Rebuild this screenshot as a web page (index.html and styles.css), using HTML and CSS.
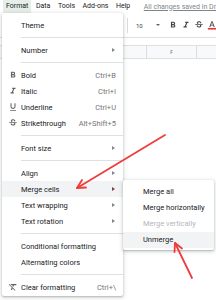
FILE: index.html
```html
<!DOCTYPE html>
<html>
<head>
<meta charset="utf-8">
<link rel="stylesheet" href="styles.css">
</head>
<body>
<div class="app">
  <div class="menubar">
    <span class="mb-item active">Format</span>
    <span class="mb-item">Data</span>
    <span class="mb-item">Tools</span>
    <span class="mb-item">Add-ons</span>
    <span class="mb-item">Help</span>
    <span class="saved">All changes saved in Drive</span>
  </div>
  <div class="toolbar">
    <span class="tb-sep"></span>
    <span class="tb-size"><span>10</span><span class="caret"></span></span>
    <span class="tb-btn"><svg viewBox="0 0 24 24"><path d="M15.6 10.79c.97-.67 1.65-1.77 1.65-2.79 0-2.26-1.75-4-4-4H7v14h7.04c2.09 0 3.71-1.7 3.71-3.79 0-1.52-.86-2.82-2.15-3.42zM10 6.5h3c.83 0 1.5.67 1.5 1.5s-.67 1.5-1.5 1.5h-3v-3zm3.5 9H10v-3h3.5c.83 0 1.5.67 1.5 1.5s-.67 1.5-1.5 1.5z"/></svg></span>
    <span class="tb-btn"><svg viewBox="0 0 24 24"><path d="M10 4v3h2.21l-3.42 8H6v3h8v-3h-2.21l3.42-8H18V4z"/></svg></span>
    <span class="tb-btn"><svg viewBox="0 0 24 24"><path d="M7.24 8.75c-.26-.48-.39-1.03-.39-1.67 0-.61.13-1.16.4-1.670.26-.5.63-.93 1.11-1.29.48-.35 1.05-.63 1.7-.83.66-.19 1.39-.29 2.18-.29.81 0 1.54.11 2.21.34.66.22 1.23.54 1.69.94.47.4.83.88 1.08 1.43.25.55.38 1.15.38 1.81h-3.01c0-.31-.05-.59-.15-.85-.09-.27-.24-.49-.44-.68-.2-.19-.45-.33-.75-.44-.3-.1-.66-.16-1.06-.16-.39 0-.74.04-1.03.13-.29.09-.53.21-.72.36-.19.16-.34.34-.44.55-.1.21-.15.43-.15.66 0 .48.25.88.74 1.21.38.25.77.48 1.41.7H7.39c-.05-.08-.11-.17-.15-.25zM21 12v-2H3v2h9.62c.18.07.4.14.55.2.37.17.66.34.87.51.21.17.35.36.43.57.07.2.11.43.11.69 0 .23-.05.45-.14.66-.09.2-.23.38-.42.53-.19.15-.42.26-.71.35-.29.08-.63.13-1.01.13-.43 0-.83-.04-1.18-.13s-.66-.23-.91-.42c-.25-.19-.45-.44-.59-.75-.14-.31-.25-.76-.25-1.21H6.4c0 .55.08 1.13.24 1.58.16.45.37.85.65 1.21.28.35.6.66.98.92.37.26.78.48 1.22.65.44.17.9.3 1.38.39.48.08.96.13 1.44.13.8 0 1.53-.09 2.18-.28s1.21-.45 1.67-.79c.46-.34.82-.77 1.07-1.27s.38-1.07.38-1.71c0-.6-.1-1.14-.31-1.61-.05-.11-.11-.23-.17-.33H21z"/></svg></span>
    <span class="tb-btn"><svg viewBox="0 0 24 24"><path d="M5.49 17h2.42l1.27-3.58h5.65L16.09 17h2.42L13.25 3h-2.5L5.49 17zm4.42-5.61l2.03-5.79h.12l2.03 5.79H9.91z"/><rect class="red" x="2" y="19" width="20" height="4"/></svg></span>
  </div>
  <div class="formula"></div>
  <div class="colheads">
    <span class="rowhead"></span>
    <span class="col">D</span>
    <span class="col">E</span>
    <span class="col">F</span>
    <span class="col"></span>
  </div>
  <div class="grid"></div>
</div>

<div class="menu main">
  <div class="item"><span class="ic"></span><span class="lbl">Theme</span></div>
  <div class="sep"></div>
  <div class="item"><span class="ic"></span><span class="lbl">Number</span><span class="arr"></span></div>
  <div class="sep"></div>
  <div class="item"><span class="ic"><svg viewBox="0 0 24 24"><path d="M15.6 10.79c.97-.67 1.65-1.77 1.65-2.79 0-2.26-1.75-4-4-4H7v14h7.04c2.09 0 3.71-1.7 3.71-3.79 0-1.52-.86-2.82-2.15-3.42zM10 6.5h3c.83 0 1.5.67 1.5 1.5s-.67 1.5-1.5 1.5h-3v-3zm3.5 9H10v-3h3.5c.83 0 1.5.67 1.5 1.5s-.67 1.5-1.5 1.5z"/></svg></span><span class="lbl">Bold</span><span class="sc">Ctrl+B</span></div>
  <div class="item"><span class="ic"><svg viewBox="0 0 24 24"><path d="M10 4v3h2.21l-3.42 8H6v3h8v-3h-2.21l3.42-8H18V4z"/></svg></span><span class="lbl">Italic</span><span class="sc">Ctrl+I</span></div>
  <div class="item"><span class="ic"><svg viewBox="0 0 24 24"><path d="M12 17c3.31 0 6-2.69 6-6V3h-2.5v8c0 1.93-1.57 3.5-3.5 3.5S8.5 12.93 8.5 11V3H6v8c0 3.31 2.69 6 6 6zm-7 2v2h14v-2H5z"/></svg></span><span class="lbl">Underline</span><span class="sc">Ctrl+U</span></div>
  <div class="item"><span class="ic"><svg viewBox="0 0 24 24"><path d="M7.24 8.75c-.26-.48-.39-1.03-.39-1.67 0-.61.13-1.16.4-1.67.26-.5.63-.93 1.11-1.29.48-.35 1.05-.63 1.7-.83.66-.19 1.39-.29 2.18-.29.81 0 1.54.11 2.21.34.66.22 1.23.54 1.69.94.47.4.83.88 1.08 1.43.25.55.38 1.15.38 1.81h-3.01c0-.31-.05-.59-.15-.85-.09-.27-.24-.49-.44-.68-.2-.19-.45-.33-.75-.44-.3-.1-.66-.16-1.06-.16-.39 0-.74.04-1.03.13-.29.09-.53.21-.72.36-.19.16-.34.34-.44.55-.1.21-.15.43-.15.66 0 .48.25.88.74 1.21.38.25.77.48 1.41.7H7.39c-.05-.08-.11-.17-.15-.25zM21 12v-2H3v2h9.62c.18.07.4.14.55.2.37.17.66.34.87.51.21.17.35.36.43.57.07.2.11.43.11.69 0 .23-.05.45-.14.66-.09.2-.23.38-.42.53-.19.15-.42.26-.71.35-.29.08-.63.13-1.01.13-.43 0-.83-.04-1.18-.13s-.66-.23-.91-.42c-.25-.19-.45-.44-.59-.75-.14-.31-.25-.76-.25-1.21H6.4c0 .55.08 1.13.24 1.58.16.45.37.85.65 1.21.28.35.6.66.98.92.37.26.78.48 1.22.65.44.17.9.3 1.38.39.48.08.96.13 1.44.13.8 0 1.53-.09 2.18-.28s1.21-.45 1.67-.79c.46-.34.82-.77 1.07-1.27s.38-1.07.38-1.71c0-.6-.1-1.14-.31-1.61-.05-.11-.11-.23-.17-.33H21z"/></svg></span><span class="lbl">Strikethrough</span><span class="sc">Alt+Shift+5</span></div>
  <div class="sep"></div>
  <div class="item"><span class="ic"></span><span class="lbl">Font size</span><span class="arr"></span></div>
  <div class="sep"></div>
  <div class="item"><span class="ic"></span><span class="lbl">Align</span><span class="arr"></span></div>
  <div class="item hover"><span class="ic"></span><span class="lbl">Merge cells</span><span class="arr dark"></span></div>
  <div class="item"><span class="ic"></span><span class="lbl">Text wrapping</span><span class="arr"></span></div>
  <div class="item"><span class="ic"></span><span class="lbl">Text rotation</span><span class="arr"></span></div>
  <div class="sep"></div>
  <div class="item"><span class="ic"></span><span class="lbl">Conditional formatting</span></div>
  <div class="item"><span class="ic"></span><span class="lbl">Alternating colors</span></div>
  <div class="sep"></div>
  <div class="item"><span class="ic"><svg viewBox="0 0 24 24"><path d="M3.27 5L2 6.27l6.97 6.97L6.5 19h3l1.57-3.66L16.73 21 18 19.73 3.55 5.27 3.27 5zM6 5v.18L8.82 8h2.4l-.72 1.68 2.1 2.1L14.21 8H20V5H6z"/></svg></span><span class="lbl">Clear formatting</span><span class="sc">Ctrl+\</span></div>
</div>

<div class="menu sub">
  <div class="sitem">Merge all</div>
  <div class="sitem">Merge horizontally</div>
  <div class="sitem disabled">Merge vertically</div>
  <div class="sitem hover">Unmerge</div>
</div>

<svg class="arrows" viewBox="0 0 216 300" width="216" height="300">
  <g fill="none" stroke="#f03c3c" stroke-width="1.8" stroke-linecap="round" stroke-linejoin="round">
    <line x1="165" y1="135" x2="77" y2="188"/>
    <polyline points="82,180 77,188 86,187.5"/>
    <line x1="192" y1="278" x2="175" y2="243"/>
    <polyline points="174.5,252 175,243 182,248.5"/>
  </g>
</svg>
</body>
</html>
```

FILE: styles.css
```css
* { box-sizing: border-box; }
html, body { margin: 0; padding: 0; }
body {
  width: 216px;
  height: 300px;
  overflow: hidden;
  position: relative;
  background: #fff;
  font-family: Roboto, "Liberation Sans", sans-serif;
  color: #202124;
}
.app { width: 216px; height: 300px; overflow: hidden; }

.menubar {
  height: 13px;
  display: flex;
  align-items: center;
  gap: 1.5px;
  padding-left: 3px;
  font-size: 7px;
  white-space: nowrap;
  overflow: hidden;
}
.mb-item { padding: 0 3px; height: 13px; line-height: 13px; }
.mb-item.active { background: #e6efe7; }
.saved {
  margin-left: 9px;
  color: #80868b;
  text-decoration: underline;
}

.toolbar {
  height: 25px;
  display: flex;
  align-items: center;
  padding-left: 127px;
  border-bottom: 1px solid #e0e0e0;
  white-space: nowrap;
}
.tb-sep { width: 1px; height: 15px; background: #dadce0; margin-right: 8px; flex: none; }
.tb-size {
  width: 25px;
  flex: none;
  display: flex;
  justify-content: space-between;
  align-items: center;
  font-size: 6px;
  color: #3c4043;
}
.caret {
  width: 0; height: 0;
  border-left: 2px solid transparent;
  border-right: 2px solid transparent;
  border-top: 2px solid #5f6368;
  margin-right: 1px;
}
.tb-btn { width: 12px; height: 12px; margin-left: 1px; display: flex; align-items: center; justify-content: center; flex: none; }
.tb-size + .tb-btn { margin-left: 6px; }
.tb-btn svg { width: 10px; height: 10px; fill: #444746; }
.tb-btn .red { fill: #e53935; }

.formula { height: 8px; border-bottom: 1px solid #e0e0e0; }

.colheads {
  height: 13px;
  display: flex;
  background: #f8f9fa;
  border-bottom: 1px solid #e0e0e0;
  font-size: 4.5px;
  color: #5f6368;
}
.rowhead { width: 46px; flex: none; }
.col {
  width: 50px;
  flex: none;
  border-left: 1px solid #dadce0;
  display: flex;
  align-items: center;
  justify-content: center;
}

.menu {
  position: absolute;
  background: #fff;
  box-shadow: 0 1px 2px rgba(60,64,67,.3), 0 1px 4px 1px rgba(60,64,67,.15);
  border-radius: 2px;
  font-size: 7.5px;
}
.main { top: 13px; left: 2px; width: 121px; padding: 4px 0 1px; }
.item {
  height: 16px;
  display: flex;
  align-items: center;
  padding-right: 7px;
  white-space: nowrap;
}
.item.hover { background: #f1f3f4; }
.ic { width: 19px; flex: none; display: flex; align-items: center; justify-content: center; padding-left: 2px; }
.ic svg { width: 10px; height: 10px; fill: #5f6368; }
.lbl { flex: 1; }
.sc { color: #757575; }
.arr {
  width: 0; height: 0;
  border-left: 3px solid #80868b;
  border-top: 2px solid transparent;
  border-bottom: 2px solid transparent;
  margin-right: 1.5px;
}
.arr.dark { border-left-color: #8a3a3a; }
.sep { height: 1px; background: #e0e0e0; margin: 4px 0 4px 19px; }

.sub { top: 180px; left: 123px; width: 91px; padding: 4px 0 2px; }
.sitem { height: 16px; line-height: 16px; padding-left: 20px; white-space: nowrap; }
.sitem.disabled { color: #b4b7bb; }
.sitem.hover { background: #f1f3f4; }

.arrows { position: absolute; top: 0; left: 0; pointer-events: none; }
```
